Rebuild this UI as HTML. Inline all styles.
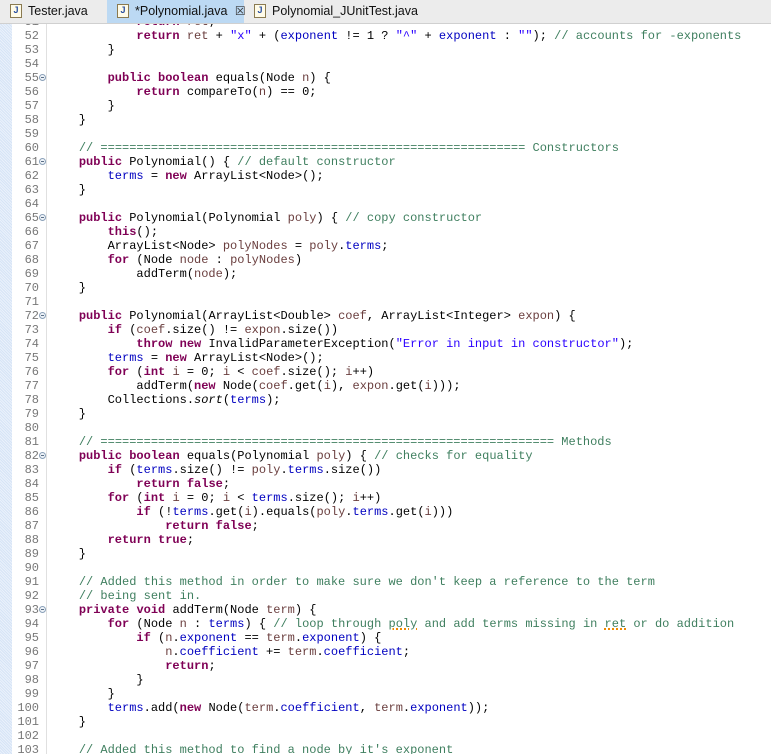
<!DOCTYPE html>
<html><head><meta charset="utf-8"><style>
html,body{margin:0;padding:0;background:#fff;width:771px;height:754px;overflow:hidden;position:relative}
#tabs{position:absolute;left:0;top:0;width:771px;height:23px;background:#ececec;border-bottom:1px solid #d0d0d0;font-family:"Liberation Sans",sans-serif;font-size:12.5px;color:#111;z-index:5}
.tab{position:absolute;top:0;height:23px;line-height:23px;white-space:nowrap}
.tab.act{background:#bcd9f3}
.ico{display:inline-block;width:10px;height:12px;border:1px solid #8a7a50;background:#fffbe8;vertical-align:middle;margin:-2px 6px 0 10px;position:relative;font-size:9px;line-height:11px;color:#2a4fa0;font-weight:bold;text-align:center;font-family:"Liberation Sans",sans-serif}
#strip{position:absolute;left:0;top:23px;width:12px;height:731px;background:repeating-linear-gradient(45deg,#d6e4f6 0 1px,#eaf1fb 1px 2px)}
#gut{position:absolute;left:46px;top:23px;width:1px;height:731px;background:#e0e0e0}
#code{position:absolute;left:0;top:15px;font-family:"Liberation Mono",monospace;font-size:12px;line-height:14px;color:#000}
.row{position:relative;height:14px;white-space:pre}
.ln{position:absolute;left:0;width:39px;text-align:right;color:#787878}
.t{position:absolute;left:50px;line-height:14px}
.fold{position:absolute;left:39px;top:3px;width:7px;height:7px;border:1px solid #8aa0b8;border-radius:50%;background:#eef3f8;box-sizing:border-box}
.fold:after{content:"";position:absolute;left:1px;top:2px;width:3px;height:1px;background:#5a6e86}
.k{color:#7f0055;font-weight:bold}.f{color:#0000c0}.c{color:#3f7f5f}.s{color:#2a00ff}.v{color:#6a3e3e}.i{font-style:italic}
.sq{text-decoration:underline dotted #f08a00;text-decoration-thickness:2px}
</style></head><body>
<div id="code"><div class="row"><span class="ln">51</span><span class="t">            <span class="k">return</span> <span class="v">ret</span>;</span></div><div class="row"><span class="ln">52</span><span class="t">            <span class="k">return</span> <span class="v">ret</span> + <span class="s">"x"</span> + (<span class="f">exponent</span> != 1 ? <span class="s">"^"</span> + <span class="f">exponent</span> : <span class="s">""</span>); <span class="c">// accounts for -exponents</span></span></div><div class="row"><span class="ln">53</span><span class="t">        }</span></div><div class="row"><span class="ln">54</span><span class="t"></span></div><div class="row"><span class="ln">55</span><span class="fold"></span><span class="t">        <span class="k">public</span> <span class="k">boolean</span> equals(Node <span class="v">n</span>) {</span></div><div class="row"><span class="ln">56</span><span class="t">            <span class="k">return</span> compareTo(<span class="v">n</span>) == 0;</span></div><div class="row"><span class="ln">57</span><span class="t">        }</span></div><div class="row"><span class="ln">58</span><span class="t">    }</span></div><div class="row"><span class="ln">59</span><span class="t"></span></div><div class="row"><span class="ln">60</span><span class="t">    <span class="c">// =========================================================== Constructors</span></span></div><div class="row"><span class="ln">61</span><span class="fold"></span><span class="t">    <span class="k">public</span> Polynomial() { <span class="c">// default constructor</span></span></div><div class="row"><span class="ln">62</span><span class="t">        <span class="f">terms</span> = <span class="k">new</span> ArrayList&lt;Node&gt;();</span></div><div class="row"><span class="ln">63</span><span class="t">    }</span></div><div class="row"><span class="ln">64</span><span class="t"></span></div><div class="row"><span class="ln">65</span><span class="fold"></span><span class="t">    <span class="k">public</span> Polynomial(Polynomial <span class="v">poly</span>) { <span class="c">// copy constructor</span></span></div><div class="row"><span class="ln">66</span><span class="t">        <span class="k">this</span>();</span></div><div class="row"><span class="ln">67</span><span class="t">        ArrayList&lt;Node&gt; <span class="v">polyNodes</span> = <span class="v">poly</span>.<span class="f">terms</span>;</span></div><div class="row"><span class="ln">68</span><span class="t">        <span class="k">for</span> (Node <span class="v">node</span> : <span class="v">polyNodes</span>)</span></div><div class="row"><span class="ln">69</span><span class="t">            addTerm(<span class="v">node</span>);</span></div><div class="row"><span class="ln">70</span><span class="t">    }</span></div><div class="row"><span class="ln">71</span><span class="t"></span></div><div class="row"><span class="ln">72</span><span class="fold"></span><span class="t">    <span class="k">public</span> Polynomial(ArrayList&lt;Double&gt; <span class="v">coef</span>, ArrayList&lt;Integer&gt; <span class="v">expon</span>) {</span></div><div class="row"><span class="ln">73</span><span class="t">        <span class="k">if</span> (<span class="v">coef</span>.size() != <span class="v">expon</span>.size())</span></div><div class="row"><span class="ln">74</span><span class="t">            <span class="k">throw</span> <span class="k">new</span> InvalidParameterException(<span class="s">"Error in input in constructor"</span>);</span></div><div class="row"><span class="ln">75</span><span class="t">        <span class="f">terms</span> = <span class="k">new</span> ArrayList&lt;Node&gt;();</span></div><div class="row"><span class="ln">76</span><span class="t">        <span class="k">for</span> (<span class="k">int</span> <span class="v">i</span> = 0; <span class="v">i</span> &lt; <span class="v">coef</span>.size(); <span class="v">i</span>++)</span></div><div class="row"><span class="ln">77</span><span class="t">            addTerm(<span class="k">new</span> Node(<span class="v">coef</span>.get(<span class="v">i</span>), <span class="v">expon</span>.get(<span class="v">i</span>)));</span></div><div class="row"><span class="ln">78</span><span class="t">        Collections.<span class="i">sort</span>(<span class="f">terms</span>);</span></div><div class="row"><span class="ln">79</span><span class="t">    }</span></div><div class="row"><span class="ln">80</span><span class="t"></span></div><div class="row"><span class="ln">81</span><span class="t">    <span class="c">// =============================================================== Methods</span></span></div><div class="row"><span class="ln">82</span><span class="fold"></span><span class="t">    <span class="k">public</span> <span class="k">boolean</span> equals(Polynomial <span class="v">poly</span>) { <span class="c">// checks for equality</span></span></div><div class="row"><span class="ln">83</span><span class="t">        <span class="k">if</span> (<span class="f">terms</span>.size() != <span class="v">poly</span>.<span class="f">terms</span>.size())</span></div><div class="row"><span class="ln">84</span><span class="t">            <span class="k">return</span> <span class="k">false</span>;</span></div><div class="row"><span class="ln">85</span><span class="t">        <span class="k">for</span> (<span class="k">int</span> <span class="v">i</span> = 0; <span class="v">i</span> &lt; <span class="f">terms</span>.size(); <span class="v">i</span>++)</span></div><div class="row"><span class="ln">86</span><span class="t">            <span class="k">if</span> (!<span class="f">terms</span>.get(<span class="v">i</span>).equals(<span class="v">poly</span>.<span class="f">terms</span>.get(<span class="v">i</span>)))</span></div><div class="row"><span class="ln">87</span><span class="t">                <span class="k">return</span> <span class="k">false</span>;</span></div><div class="row"><span class="ln">88</span><span class="t">        <span class="k">return</span> <span class="k">true</span>;</span></div><div class="row"><span class="ln">89</span><span class="t">    }</span></div><div class="row"><span class="ln">90</span><span class="t"></span></div><div class="row"><span class="ln">91</span><span class="t">    <span class="c">// Added this method in order to make sure we don't keep a reference to the term</span></span></div><div class="row"><span class="ln">92</span><span class="t">    <span class="c">// being sent in.</span></span></div><div class="row"><span class="ln">93</span><span class="fold"></span><span class="t">    <span class="k">private</span> <span class="k">void</span> addTerm(Node <span class="v">term</span>) {</span></div><div class="row"><span class="ln">94</span><span class="t">        <span class="k">for</span> (Node <span class="v">n</span> : <span class="f">terms</span>) { <span class="c">// loop through <span class="sq">poly</span> and add terms missing in <span class="sq">ret</span> or do addition</span></span></div><div class="row"><span class="ln">95</span><span class="t">            <span class="k">if</span> (<span class="v">n</span>.<span class="f">exponent</span> == <span class="v">term</span>.<span class="f">exponent</span>) {</span></div><div class="row"><span class="ln">96</span><span class="t">                <span class="v">n</span>.<span class="f">coefficient</span> += <span class="v">term</span>.<span class="f">coefficient</span>;</span></div><div class="row"><span class="ln">97</span><span class="t">                <span class="k">return</span>;</span></div><div class="row"><span class="ln">98</span><span class="t">            }</span></div><div class="row"><span class="ln">99</span><span class="t">        }</span></div><div class="row"><span class="ln">100</span><span class="t">        <span class="f">terms</span>.add(<span class="k">new</span> Node(<span class="v">term</span>.<span class="f">coefficient</span>, <span class="v">term</span>.<span class="f">exponent</span>));</span></div><div class="row"><span class="ln">101</span><span class="t">    }</span></div><div class="row"><span class="ln">102</span><span class="t"></span></div><div class="row"><span class="ln">103</span><span class="t">    <span class="c">// Added this method to find a node by it's exponent</span></span></div></div>
<div id="strip"></div><div id="gut"></div>
<div id="tabs">
<div class="tab" style="left:0;width:106px"><span class="ico">J</span>Tester.java</div>
<div class="tab act" style="left:107px;width:137px"><span class="ico">J</span>*Polynomial.java <span style="margin-left:4px;font-size:12px;color:#333">&#x2612;</span></div>
<div class="tab" style="left:244px;width:200px"><span class="ico">J</span>Polynomial_JUnitTest.java</div>
</div>
</body></html>
